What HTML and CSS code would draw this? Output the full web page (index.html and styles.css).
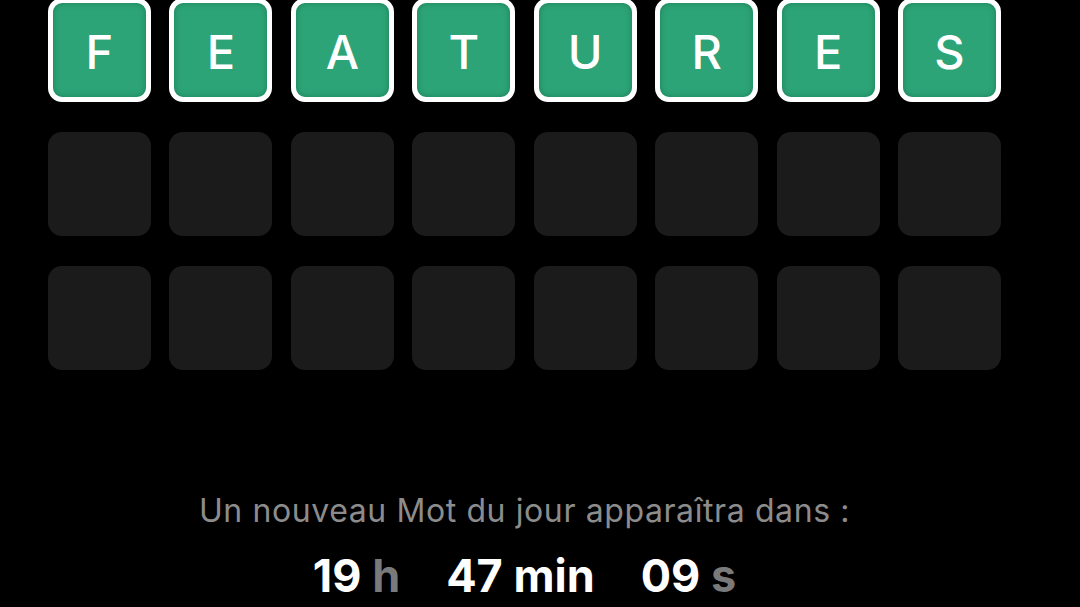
FILE: index.html
```html
<!DOCTYPE html>
<html lang="fr">
<head>
<meta charset="utf-8">
<link rel="stylesheet" href="styles.css">
</head>
<body>
<main class="game">
  <div class="board">
    <div class="row">
      <div class="tile correct">F</div>
      <div class="tile correct">E</div>
      <div class="tile correct">A</div>
      <div class="tile correct">T</div>
      <div class="tile correct">U</div>
      <div class="tile correct">R</div>
      <div class="tile correct">E</div>
      <div class="tile correct">S</div>
    </div>
    <div class="row">
      <div class="tile"></div><div class="tile"></div><div class="tile"></div><div class="tile"></div>
      <div class="tile"></div><div class="tile"></div><div class="tile"></div><div class="tile"></div>
    </div>
    <div class="row">
      <div class="tile"></div><div class="tile"></div><div class="tile"></div><div class="tile"></div>
      <div class="tile"></div><div class="tile"></div><div class="tile"></div><div class="tile"></div>
    </div>
  </div>
  <section class="next">
    <p class="next-label">Un nouveau Mot du jour apparaîtra dans :</p>
    <p class="countdown">
      <span class="unit">19 <span class="muted">h</span></span>
      <span class="unit">47 min</span>
      <span class="unit">09 <span class="muted">s</span></span>
    </p>
  </section>
</main>
</body>
</html>
```
FILE: styles.css
```css
html, body {
  margin: 0;
  padding: 0;
  background: #000;
  height: 100%;
  overflow: hidden;
}
body {
  font-family: "Inter", "Lato", sans-serif;
  color: #fff;
}
.game {
  width: 1049px;
  box-sizing: border-box;
  padding: 0 48px;
}
.board {
  display: flex;
  flex-direction: column;
  gap: 30px;
  margin-top: -2px;
}
.row {
  display: grid;
  grid-template-columns: repeat(8, 1fr);
  column-gap: 18.5px;
}
.tile {
  height: 104px;
  border-radius: 14px;
  background: #1b1b1b;
  box-sizing: border-box;
  display: flex;
  align-items: center;
  justify-content: center;
  font-size: 47px;
  font-weight: 500;
  color: #fff;
}
.tile.correct {
  background: #2ca477;
  border: 5px solid #fff;
  border-radius: 14px;
  box-shadow: inset 0 0 6px rgba(0, 60, 30, 0.35);
  padding-top: 2px;
}
.next {
  text-align: center;
  margin-top: 121px;
}
.next-label {
  margin: 0;
  font-size: 32px;
  font-weight: 400;
  color: #8c8c8c;
  line-height: 40px;
  letter-spacing: 0.6px;
}
.countdown {
  margin: 17px 0 0;
  font-size: 45px;
  font-weight: 700;
  line-height: 56px;
  display: flex;
  justify-content: center;
  gap: 46px;
}
.muted {
  color: #7a7a7a;
}
```
